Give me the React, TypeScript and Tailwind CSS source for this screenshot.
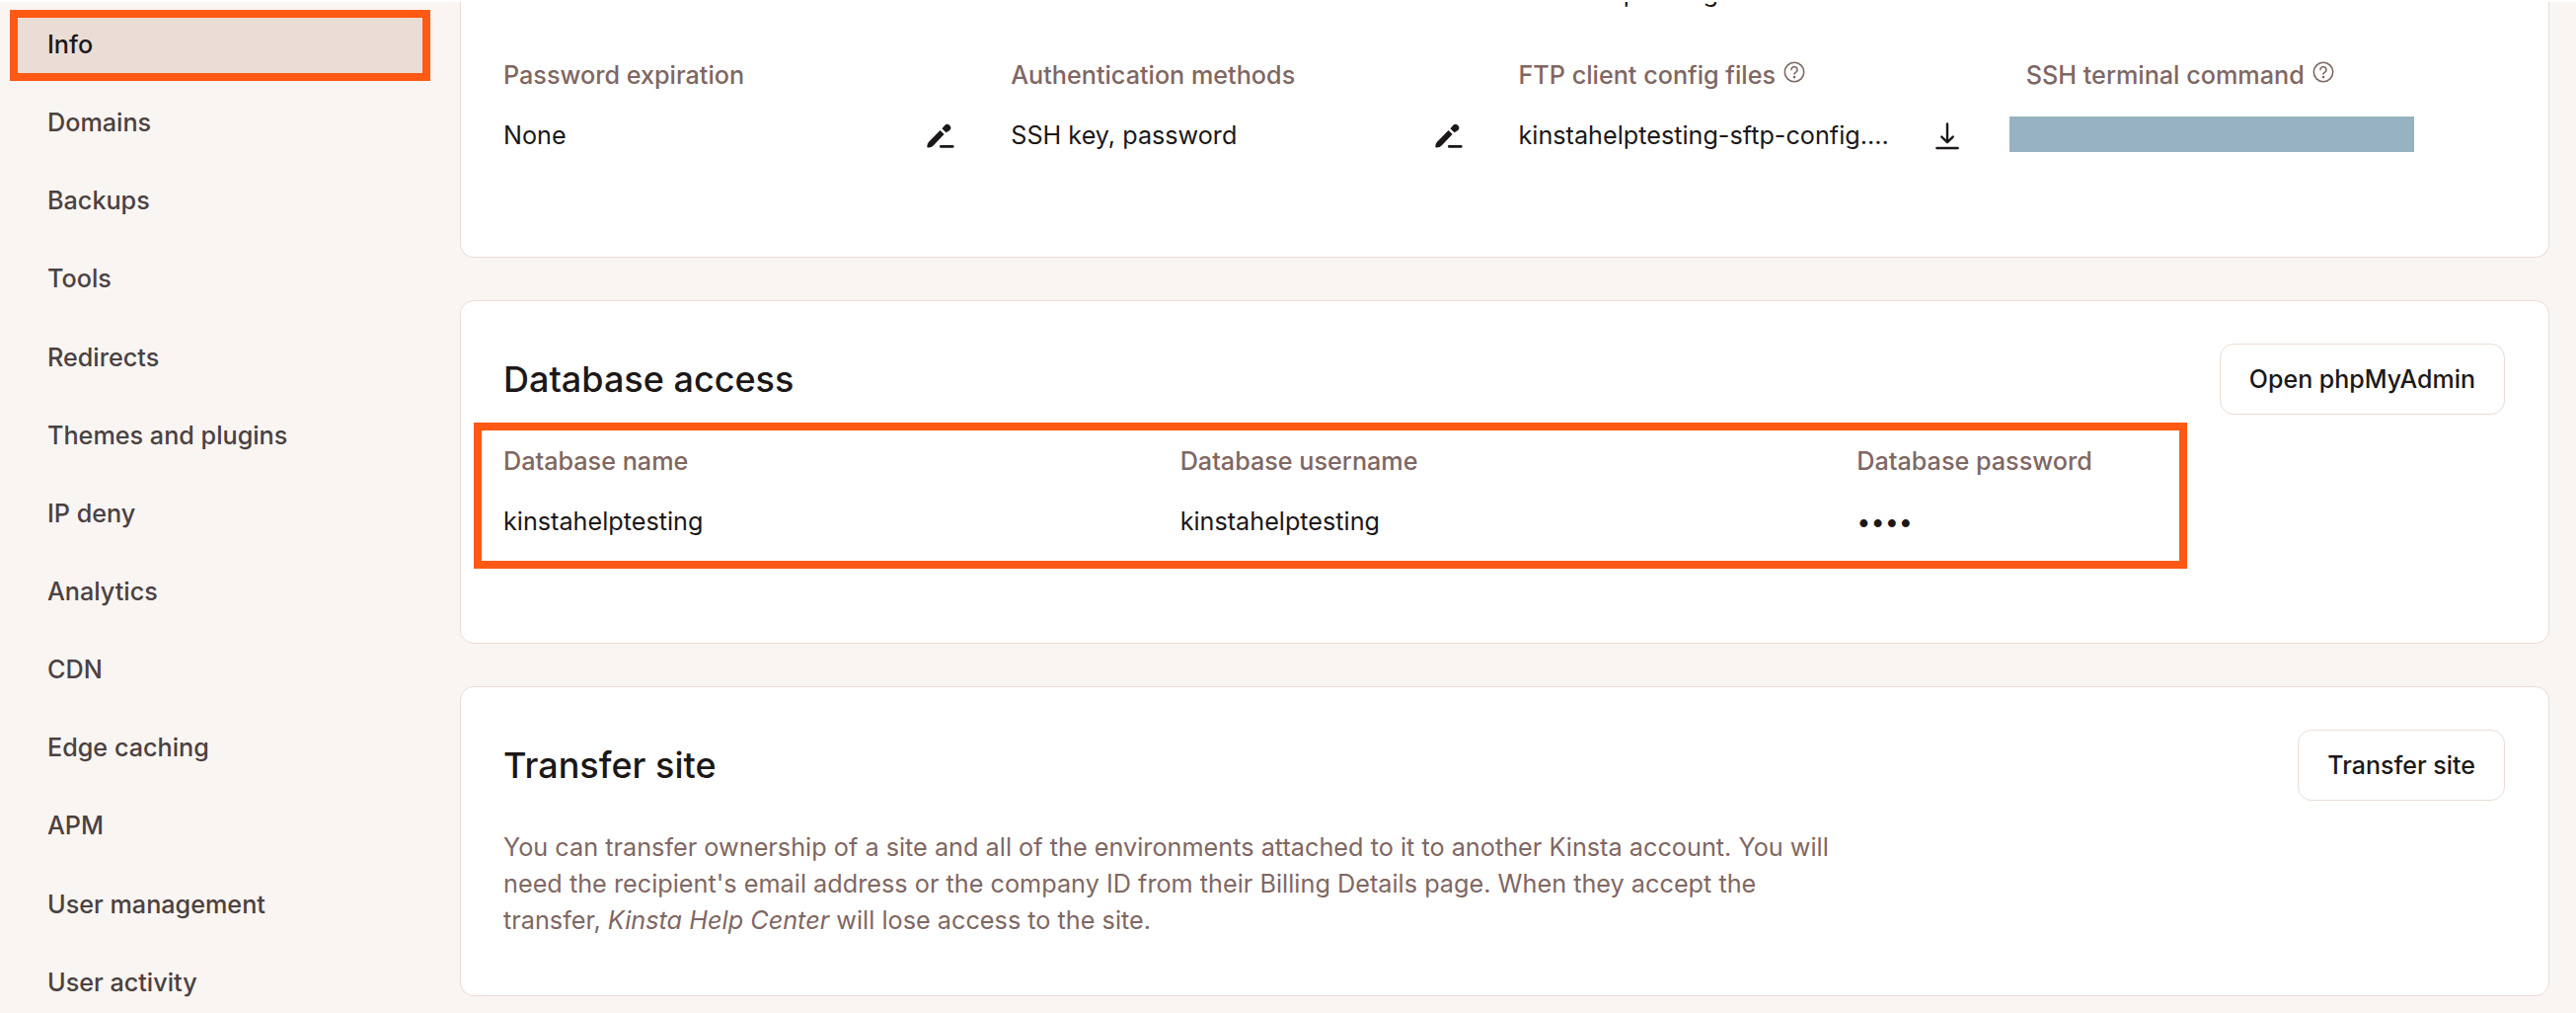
import type { ReactNode } from 'react';

interface FieldProps {
	label: string;
	value?: ReactNode;
	help?: boolean;
	action?: ReactNode;
}

interface CardProps {
	title: string;
	action: string;
	className: string;
	children: ReactNode;
}

const navItems = [
	'Info',
	'Domains',
	'Backups',
	'Tools',
	'Redirects',
	'Themes and plugins',
	'IP deny',
	'Analytics',
	'CDN',
	'Edge caching',
	'APM',
	'User management',
	'User activity'
];

const HelpIcon = () => (
	<svg
		className="w-[22px] h-[22px] mb-[7px]"
		viewBox="0 0 22 22"
		fill="none"
		stroke="currentColor"
		strokeWidth="1.6"
		strokeLinecap="round"
		strokeLinejoin="round"
	>
		<circle cx="11" cy="11" r="9.7" />
		<path d="M8 8.6a3 3 0 1 1 4.6 2.5c-1 .6-1.6 1-1.6 1.9" />
		<circle cx="11" cy="16.1" r="1.3" fill="currentColor" stroke="none" />
	</svg>
);

const EditIcon = () => (
	<svg className="w-[28px] h-[25px]" viewBox="0 0 28 25" fill="currentColor">
		<path d="M13.6 7.1 17.6 11 6.6 22.6Q5 24.4 1.6 24.6.2 24.7.3 23.2.4 20.4 2 18.8Z" />
		<path d="M15.4 5.2 18.2 2.1a3.5 3.5 0 0 1 5 5L19.6 9.2Z" />
		<rect x="13" y="22" width="14.6" height="2.8" rx="1.3" />
	</svg>
);

const DownloadIcon = () => (
	<svg
		className="w-[24px] h-[28px] mr-[11px]"
		viewBox="0 0 24 28"
		fill="none"
		stroke="currentColor"
		strokeWidth="2.4"
		strokeLinecap="round"
		strokeLinejoin="round"
	>
		<path d="M12 1.5v18.5M6.3 14.6 12 20.2l5.7-5.6M1.4 26h21.2" />
	</svg>
);

const Field = ({ label, value, help = false, action }: FieldProps) => (
	<div className="min-w-0">
		<div className="flex items-center gap-2 h-[37px] font-medium text-[#7f6763]">
			{label}
			{help && <HelpIcon />}
		</div>
		<div className="flex items-center justify-between mt-6 h-[37px] pr-[28px]">
			{value}
			{action}
		</div>
	</div>
);

const Card = ({ title, action, className, children }: CardProps) => (
	<section
		className={`bg-white border border-[#ebdcd5] rounded-[14px] pl-[43px] pr-[44px] pt-[43px] ${className}`}
	>
		<div className="flex items-center justify-between h-[72px]">
			<h2 className="pt-px text-[36px] font-medium">{title}</h2>
			<button className="h-[72px] px-[29px] pt-[2px] border border-[#ebdcd5] rounded-[14px] text-[25px] font-medium">
				{action}
			</button>
		</div>
		{children}
	</section>
);

const App = () => {
	return (
		<div className="flex w-[2610px] h-[1026px] overflow-hidden border-t-2 border-white bg-[#f9f5f2] font-['Inter',sans-serif] text-[25.2px] leading-[37.2px] text-[#1c1818]">
			{/* Sidebar */}
			<nav className="w-[466px] shrink-0 pt-[4px] font-medium text-[#4b4141]">
				{navItems.map((item) => (
					<div key={item} className="relative flex items-center h-[79.15px] pl-[48px]">
						{item === 'Info' ? (
							<>
								<div className="absolute left-[10px] top-[4px] w-[426px] h-[72px] border-8 border-[#ff5915] bg-[#eaddd6]" />
								<span className="relative text-[#1c1818]">{item}</span>
							</>
						) : (
							item
						)}
					</div>
				))}
			</nav>

			<main className="w-[2117px] shrink-0">
				{/* SFTP/SSH, scrolled so that only the lower rows show */}
				<section className="h-[259px] overflow-hidden bg-white border border-t-0 border-[#ebdcd5] rounded-b-[14px] pl-[43px] pr-[44px]">
					<div className="grid grid-cols-4 gap-x-[29px] h-[37px] -mt-[27px]">
						<span>35.242.16.83</span>
						<span>58356</span>
						<span>kinstahelptesting</span>
					</div>
					<div className="grid grid-cols-4 gap-x-[29px] mt-[46px]">
						<Field label="Password expiration" value="None" action={<EditIcon />} />
						<Field
							label="Authentication methods"
							value="SSH key, password"
							action={<EditIcon />}
						/>
						<Field
							label="FTP client config files"
							value="kinstahelptesting-sftp-config...."
							help
							action={<DownloadIcon />}
						/>
						<Field
							label="SSH terminal command"
							value={<div className="w-[410px] h-[36px] -ml-[17px] mb-[3px] bg-[#97b2c0]" />}
							help
						/>
					</div>
				</section>

				<Card title="Database access" action="Open phpMyAdmin" className="relative h-[348px] mt-[43px]">
					<div className="grid grid-cols-3 gap-x-[29px] mt-[29px]">
						<Field label="Database name" value="kinstahelptesting" />
						<Field label="Database username" value="kinstahelptesting" />
						<Field label="Database password" value="••••" />
					</div>
					<div className="absolute left-[13px] top-[123px] w-[1736px] h-[148px] border-8 border-[#ff5915]" />
				</Card>

				<Card title="Transfer site" action="Transfer site" className="h-[314px] mt-[43px]">
					<p className="mt-[29px] w-[1350px] text-[25.25px] text-[#7f6763]">
						You can transfer ownership of a site and all of the environments attached to it to
						another Kinsta account. You will need the recipient's email address or the company ID
						from their Billing Details page. When they accept the transfer,{' '}
						<em>Kinsta Help Center</em> will lose access to the site.
					</p>
				</Card>
			</main>
		</div>
	);
};

export default App;
